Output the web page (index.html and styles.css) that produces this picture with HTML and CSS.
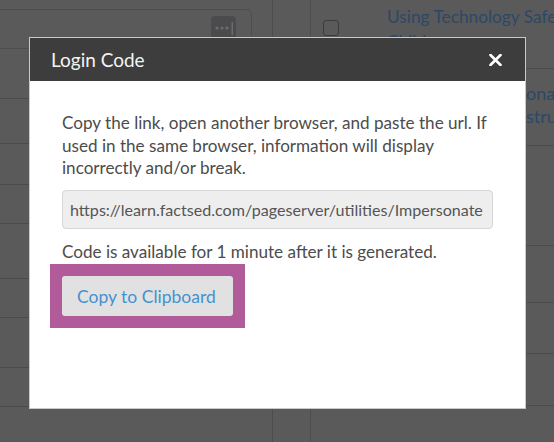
FILE: index.html
```html
<!DOCTYPE html>
<html lang="en">
<head>
<meta charset="utf-8">
<title>Login Code</title>
<link rel="stylesheet" href="styles.css">
</head>
<body>
<div class="page">
  <div class="col col-left">
    <div class="row-search">
      <div class="search">
        <span class="more">
          <svg width="25" height="26" viewBox="0 0 25 26">
            <circle cx="6" cy="12" r="1.6" fill="#6c6c6f"/>
            <circle cx="11" cy="12" r="1.6" fill="#6c6c6f"/>
            <circle cx="16" cy="12" r="1.6" fill="#6c6c6f"/>
            <rect x="20.5" y="6" width="1.5" height="13" fill="#6c6c6f"/>
          </svg>
        </span>
      </div>
    </div>
    <div class="lrow"></div>
    <div class="lrow"></div>
    <div class="lrow"></div>
    <div class="lrow"></div>
    <div class="lrow"></div>
    <div class="lrow"></div>
    <div class="lrow"></div>
    <div class="lrow"></div>
    <div class="lrow last"></div>
  </div>
  <div class="col col-mid"></div>
  <div class="col col-right">
    <div class="rrow rrow-first">
      <span class="checkbox"></span>
      <div class="course">Using Technology Safely with<br>Children</div>
    </div>
    <div class="rrow rrow-second">
      <div class="course-two">
        <div class="course-line"><span class="lead">Social and Emoti</span>onal</div>
        <div class="course-line"><span class="lead">Classroom In</span>struction</div>
      </div>
    </div>
    <div class="rrow"></div>
    <div class="rrow"></div>
    <div class="rrow"></div>
    <div class="rrow"></div>
    <div class="rrow last"></div>
  </div>
</div>

<div class="modal">
  <div class="modal-header">
    <span class="modal-title">Login Code</span>
    <span class="modal-close">
      <svg width="13" height="12" viewBox="0 0 13 12">
        <path d="M1.5 1 L11.5 11 M11.5 1 L1.5 11" stroke="#ffffff" stroke-width="2.6" stroke-linecap="round"/>
      </svg>
    </span>
  </div>
  <div class="modal-body">
    <p class="intro">Copy the link, open another browser, and paste the url. If used in the same browser, information will display incorrectly and/or break.</p>
    <div class="url-field"><span class="url-text">https://learn.factsed.com/pageserver/utilities/ImpersonateUser?code=8f3a2c</span></div>
    <p class="note">Code is available for 1 minute after it is generated.</p>
    <div class="highlight">
      <button class="copy-btn" type="button">Copy to Clipboard</button>
    </div>
  </div>
</div>
</body>
</html>
```

FILE: styles.css
```css
html, body {
  margin: 0;
  padding: 0;
}

body {
  width: 554px;
  height: 442px;
  overflow: hidden;
  position: relative;
  background: #5a5a5a;
  font-family: Lato, "Open Sans", "Liberation Sans", sans-serif;
}

.page {
  display: grid;
  grid-template-columns: 273px 38px 1fr;
  height: 442px;
  background: #5a5a5a;
}

.col {
  box-sizing: border-box;
}

.col-left {
  border-right: 1px solid #4d4d4d;
  display: grid;
  grid-template-rows: 49px 50px 45px 41px 39px 55px 39px 50px 39px 1fr;
}

.col-mid {
  border-right: 1px solid #4d4d4d;
}

.row-search {
  padding-top: 9px;
  box-sizing: border-box;
}

.search {
  margin-left: -10px;
  width: 262px;
  height: 40px;
  box-sizing: border-box;
  border: 1px solid #4e4e4e;
  border-radius: 5px;
  display: flex;
  justify-content: flex-end;
  padding: 6px 15px 0 0;
}

.more {
  display: block;
  width: 25px;
  height: 26px;
  background: #4b4b4e;
  border-radius: 4px;
}

.more svg {
  display: block;
}

.lrow {
  box-sizing: border-box;
  border-bottom: 1px solid #4b4b4b;
}

.lrow.last,
.rrow.last {
  border-bottom: none;
}

.col-right {
  display: grid;
  grid-template-rows: 69px 77px 100px 57px 51px 52px 1fr;
  overflow: hidden;
}

.rrow {
  box-sizing: border-box;
  border-bottom: 1px solid #4b4b4b;
}

.rrow-first {
  display: flex;
  align-items: flex-start;
}

.checkbox {
  display: block;
  width: 16px;
  height: 16px;
  box-sizing: border-box;
  border: 1.5px solid #3b3b3b;
  border-radius: 3px;
  margin: 20px 0 0 12px;
  flex: none;
}

.course {
  margin: 3.5px 0 0 48px;
  color: #2c4866;
  font-size: 17.3px;
  line-height: 25px;
  white-space: nowrap;
}

.rrow-second {
  padding-top: 13px;
}

.course-two {
  margin-left: 76px;
  color: #2c4866;
  font-size: 18px;
  line-height: 23px;
  white-space: nowrap;
}

.course-line .lead {
  display: inline-block;
  width: 139px;
  text-align: right;
  overflow: hidden;
  vertical-align: top;
}

.modal {
  position: absolute;
  left: 29px;
  top: 37px;
  width: 497px;
  height: 372px;
  box-sizing: border-box;
  border: 1px solid #c9c9c9;
  background: #ffffff;
}

.modal-header {
  height: 43px;
  background: #3d3d3d;
  display: flex;
  align-items: center;
  justify-content: space-between;
  padding: 0 23px 0 21px;
}

.modal-title {
  color: #f4f4f4;
  font-size: 19px;
  line-height: 22px;
  padding-top: 1px;
}

.modal-close {
  display: flex;
}

.modal-body {
  padding: 31px 32px 0 32px;
  color: #4c4c4c;
  font-size: 17.1px;
  line-height: 22.5px;
}

.intro {
  margin: 0;
}

.url-field {
  margin-top: 10px;
  height: 39px;
  box-sizing: border-box;
  border: 1px solid #d6d6d6;
  border-radius: 4px;
  background: #eeeeee;
  padding: 0 9px 0 7px;
  font-size: 16.1px;
  line-height: 37px;
  color: #555555;
}

.url-text {
  display: block;
  white-space: nowrap;
  overflow: hidden;
}

.note {
  margin: 12px 0 0 0;
}

.highlight {
  display: inline-block;
  margin: 1px 0 0 -12px;
  padding: 12px;
  background: #b15b9b;
}

.copy-btn {
  display: block;
  width: 171px;
  height: 40px;
  border: none;
  border-radius: 3px;
  background: #e1e1e1;
  color: #4591d2;
  font-family: Lato, "Open Sans", "Liberation Sans", sans-serif;
  font-size: 17.5px;
  padding: 0 0 0 15px;
  text-align: left;
}
```
